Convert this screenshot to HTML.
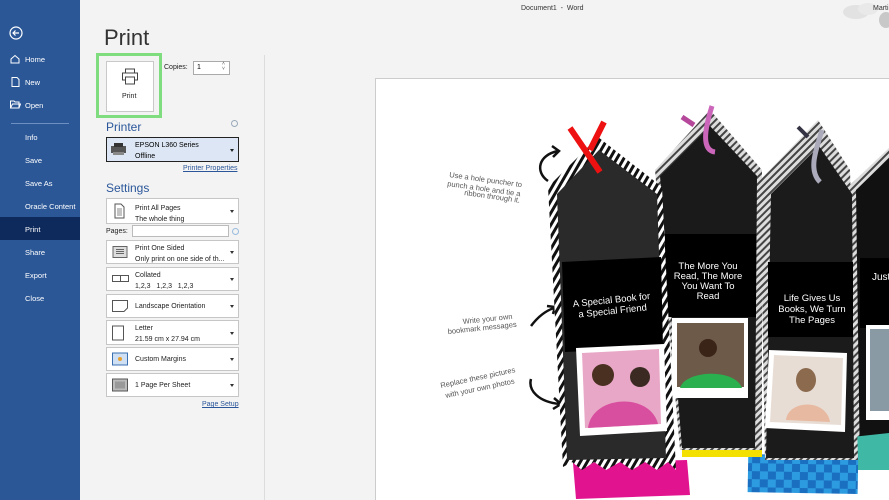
<!DOCTYPE html>
<html><head><meta charset="utf-8"><style>
*{margin:0;padding:0;box-sizing:border-box}
body{width:889px;height:500px;overflow:hidden;background:#f3f3f3;font-family:"Liberation Sans",sans-serif;position:relative}
.a{position:absolute}
#side{left:0;top:0;width:80px;height:500px;background:#2b5797}
.nav{position:absolute;left:25px;color:#fff;font-size:7.5px}
.dd{position:absolute;left:106px;width:133px;background:#fff;border:1px solid #c6c6c6;font-size:7px;color:#222}
.dd .t{position:absolute;left:28px;top:4px;line-height:11px}
.dd .ar{position:absolute;right:4px;top:50%;margin-top:-1px;border-left:2.5px solid transparent;border-right:2.5px solid transparent;border-top:3px solid #333}
.dd .ic{position:absolute;left:5px;top:50%;transform:translateY(-50%)}
.lnk{color:#2b579a;text-decoration:underline;font-size:7px}
</style></head><body>
<div id="side" class="a">
 <svg class="a" style="left:9px;top:26px" width="14" height="14" viewBox="0 0 14 14"><circle cx="7" cy="7" r="6" fill="none" stroke="#fff" stroke-width="1.2"/><path d="M10 7H4M6.5 4.5L4 7l2.5 2.5" fill="none" stroke="#fff" stroke-width="1.2"/></svg>
 <svg class="a" style="left:10px;top:54px" width="10" height="10" viewBox="0 0 10 10"><path d="M1 5L5 1.5 9 5V9H1Z" fill="none" stroke="#fff"/></svg>
 <div class="nav" style="top:55px">Home</div>
 <svg class="a" style="left:11px;top:77px" width="9" height="10" viewBox="0 0 9 10"><path d="M1 .5H6L8 2.5V9.5H1Z" fill="none" stroke="#fff"/></svg>
 <div class="nav" style="top:78px">New</div>
 <svg class="a" style="left:10px;top:100px" width="11" height="9" viewBox="0 0 11 9"><path d="M.5 1H4L5 2H9V8H.5ZM.5 8L2.5 4H10.5L9 8" fill="none" stroke="#fff"/></svg>
 <div class="nav" style="top:101px">Open</div>
 <div class="a" style="left:11px;top:123px;width:58px;height:1px;background:#6d8fc2"></div>
 <div class="nav" style="top:133px">Info</div>
 <div class="nav" style="top:156px">Save</div>
 <div class="nav" style="top:179px">Save As</div>
 <div class="nav" style="top:202px">Oracle Content</div>
 <div class="a" style="left:0;top:217px;width:80px;height:23px;background:#0e2a5c"></div>
 <div class="nav" style="top:225px">Print</div>
 <div class="nav" style="top:248px">Share</div>
 <div class="nav" style="top:271px">Export</div>
 <div class="nav" style="top:294px">Close</div>
</div>
<div class="a" style="left:521px;top:5px;font-size:7px;color:#333">Document1 &nbsp;- &nbsp;Word</div>
<svg class="a" style="left:820px;top:0" width="69" height="30"><ellipse cx="36" cy="12" rx="13" ry="7" fill="#e2e2e2"/><ellipse cx="48" cy="9" rx="10" ry="6" fill="#e9e9e9"/><ellipse cx="66" cy="20" rx="7" ry="8" fill="#c8c8c8"/></svg>
<div class="a" style="left:873px;top:5px;font-size:7px;color:#333">Marti</div>
<div class="a" style="left:104px;top:25px;font-size:22px;color:#333">Print</div>
<div class="a" style="left:96px;top:53px;width:66px;height:65px;border:3px solid #7fdc7f"></div>
<div class="a" style="left:106px;top:61px;width:48px;height:51px;background:#fff;border:1px solid #c9c9c9"></div>
<svg class="a" style="left:121px;top:68px" width="18" height="17" viewBox="0 0 18 17"><path d="M4.5 5V1H13.5V5M4.5 12H1.5V5H16.5V12H13.5M4.5 9H13.5V16H4.5Z" fill="#fff" stroke="#444" stroke-width="1"/></svg>
<div class="a" style="left:122px;top:93px;font-size:7px;color:#222">Print</div>
<div class="a" style="left:164px;top:64px;font-size:7px;color:#222">Copies:</div>
<div class="a" style="left:193px;top:61px;width:37px;height:14px;background:#fff;border:1px solid #aaa;font-size:7px;padding:2px 3px">1</div>
<div class="a" style="left:222px;top:62px;font-size:5px;color:#555;line-height:5px">˄<br>˅</div>
<div class="a" style="left:106px;top:120px;font-size:12px;color:#2b579a">Printer</div>
<div class="a" style="left:231px;top:120px;width:7px;height:7px;border:1px solid #9ab;border-radius:50%"></div>
<div class="a" style="left:106px;top:137px;width:133px;height:25px;background:#dce6f4;border:1.5px solid #222;font-size:7px">
 <svg class="a" style="left:3px;top:5px" width="18" height="13"><rect x="1" y="3" width="15" height="7" fill="#555"/><rect x="4" y="0" width="9" height="4" fill="#333"/><rect x="3" y="9" width="11" height="3" fill="#888"/></svg>
 <div class="a" style="left:28px;top:2px;line-height:11px">EPSON L360 Series<br>Offline</div>
 <div class="a" style="right:4px;top:11px;border-left:2.5px solid transparent;border-right:2.5px solid transparent;border-top:3px solid #222"></div>
</div>
<div class="a lnk" style="left:183px;top:165px">Printer Properties</div>
<div class="a" style="left:106px;top:181px;font-size:12px;color:#2b579a">Settings</div>
<div class="dd" style="top:198px;height:26px"><svg class="ic" width="14" height="16"><path d="M3 1H9L12 4V15H3Z" fill="#fff" stroke="#555"/><path d="M5 6H10M5 8H10M5 10H10M5 12H10" stroke="#888"/></svg><div class="t">Print All Pages<br>The whole thing</div><div class="ar"></div></div>
<div class="a" style="left:106px;top:228px;font-size:7px;color:#222">Pages:</div>
<div class="a" style="left:132px;top:225px;width:97px;height:12px;background:#fff;border:1px solid #bbb"></div>
<div class="a" style="left:232px;top:228px;width:7px;height:7px;border:1px solid #9bd;border-radius:50%"></div>
<div class="dd" style="top:240px;height:24px"><svg class="ic" width="16" height="13"><rect x="1" y="1" width="14" height="11" fill="#ddd" stroke="#666"/><path d="M4 4H12M4 6H12M4 8H12" stroke="#666"/></svg><div class="t" style="top:2px">Print One Sided<br>Only print on one side of th...</div><div class="ar"></div></div>
<div class="dd" style="top:267px;height:24px"><svg class="ic" width="18" height="8"><rect x=".5" y=".5" width="8" height="6" fill="#fff" stroke="#555"/><rect x="8.5" y=".5" width="8" height="6" fill="#fff" stroke="#555"/></svg><div class="t" style="top:2px">Collated<br>1,2,3 &nbsp;&nbsp;1,2,3 &nbsp;&nbsp;1,2,3</div><div class="ar"></div></div>
<div class="dd" style="top:294px;height:24px"><svg class="ic" width="16" height="12"><path d="M.5 .5H15.5V8L12 11.5H.5Z" fill="#fff" stroke="#555"/></svg><div class="t" style="top:6px">Landscape Orientation</div><div class="ar"></div></div>
<div class="dd" style="top:320px;height:25px"><svg class="ic" width="12" height="15"><rect x=".5" y=".5" width="11" height="14" fill="#fff" stroke="#555"/></svg><div class="t" style="top:2px">Letter<br>21.59 cm x 27.94 cm</div><div class="ar"></div></div>
<div class="dd" style="top:347px;height:24px"><svg class="ic" width="16" height="13"><rect x=".5" y=".5" width="15" height="12" fill="#cfe0f4" stroke="#3a6fb0"/><circle cx="8" cy="6.5" r="2" fill="#e8a030"/></svg><div class="t" style="top:6px">Custom Margins</div><div class="ar"></div></div>
<div class="dd" style="top:373px;height:24px"><svg class="ic" width="16" height="13"><rect x=".5" y=".5" width="15" height="12" fill="#bbb" stroke="#555"/><rect x="3" y="3" width="10" height="7" fill="#999"/></svg><div class="t" style="top:6px">1 Page Per Sheet</div><div class="ar"></div></div>
<div class="a lnk" style="left:202px;top:401px">Page Setup</div>
<div class="a" style="left:264px;top:55px;width:1px;height:445px;background:#dcdcdc"></div>
<div class="a" style="left:375px;top:78px;width:514px;height:422px;background:#fff;border-left:1px solid #ccc;border-top:1px solid #ccc"></div>
<svg class="a" style="left:0;top:0" width="889" height="500">
<defs>
<pattern id="zz" width="6" height="6" patternUnits="userSpaceOnUse" patternTransform="rotate(30)"><rect width="6" height="6" fill="#fff"/><rect width="3" height="6" fill="#111"/></pattern>
<pattern id="sk" width="5" height="5" patternUnits="userSpaceOnUse" patternTransform="rotate(45)"><rect width="5" height="5" fill="#ddd"/><rect width="2" height="5" fill="#444"/></pattern>
<pattern id="bc" width="16" height="16" patternUnits="userSpaceOnUse"><rect width="16" height="16" fill="#1a6fc0"/><rect width="8" height="8" fill="#2d9be0"/><rect x="8" y="8" width="8" height="8" fill="#2d9be0"/></pattern>
</defs>
<g font-family="Liberation Sans,sans-serif" fill="#555" font-size="7.5">
<text transform="translate(449,177) rotate(8)">Use a hole puncher to</text>
<text transform="translate(447,186) rotate(8)">punch a hole and tie a</text>
<text transform="translate(464,195) rotate(8)">ribbon through it.</text>
<text transform="translate(463,324) rotate(-6)">Write your own</text>
<text transform="translate(448,334) rotate(-6)">bookmark messages</text>
<text transform="translate(441,388) rotate(-12)">Replace these pictures</text>
<text transform="translate(446,398) rotate(-12)">with your own photos</text>
</g>
<g fill="none" stroke="#111" stroke-width="2.5">
<path d="M548 181C535 172 538 155 558 151M552 146L559 151 553 157"/>
<path d="M531 326C537 318 545 311 554 308M547 306L555 307 553 314"/>
<path d="M531 379C528 390 538 402 560 404M554 398L561 404 553 409"/>
</g>
<path d="M850 185L889 148V470H855Z" fill="url(#sk)"/>
<path d="M856 190L889 158V470H860Z" fill="#111"/>
<rect x="860" y="258" width="29" height="70" fill="#000"/>
<text x="872" y="280" fill="#fff" font-size="10" font-family="Liberation Sans,sans-serif">Just</text>
<rect x="866" y="325" width="23" height="95" fill="#fff"/><rect x="870" y="329" width="19" height="82" fill="#8a9aa5"/>
<path d="M852 437L889 433V470H855Z" fill="#3fb8a5"/>
<rect x="748" y="455" width="110" height="38" fill="url(#bc)" transform="rotate(1 800 470)"/>
<path d="M760 180L818 120L850 170L858 460H765Z" fill="url(#sk)"/>
<path d="M771 194L819 146L852 194L854 458H766Z" fill="#1b1b1b"/>
<rect x="768" y="262" width="85" height="75" fill="#000"/>
<text fill="#fff" font-size="9.5" font-family="Liberation Sans,sans-serif" text-anchor="middle"><tspan x="812" y="301">Life Gives Us</tspan><tspan x="812" y="312">Books, We Turn</tspan><tspan x="812" y="323">The Pages</tspan></text>
<path d="M769 350L847 353L845 432L765 428Z" fill="#fff"/>
<path d="M774 355L843 358L841 425L770 422Z" fill="#e8ddd5"/>
<ellipse cx="806" cy="380" rx="10" ry="12" fill="#8b6a4e"/><path d="M786 420C788 400 826 398 830 422Z" fill="#e7b9a0"/>
<path d="M798 127L808 137" stroke="#334" stroke-width="4"/><path d="M822 130C816 150 808 170 820 182" stroke="#aab" stroke-width="5" fill="none"/>
<rect x="682" y="450" width="80" height="7" fill="#f4e000"/>
<path d="M655 170L710 110L762 170L762 450H680Z" fill="url(#sk)"/>
<path d="M660 176L710 126L757 176L755 448H682Z" fill="#1a1a1a"/>
<rect x="665" y="234" width="91" height="83" fill="#000"/>
<text fill="#fff" font-size="9.5" font-family="Liberation Sans,sans-serif" text-anchor="middle"><tspan x="708" y="269">The More You</tspan><tspan x="708" y="279">Read, The More</tspan><tspan x="708" y="289">You Want To</tspan><tspan x="708" y="299">Read</tspan></text>
<rect x="672" y="318" width="76" height="80" fill="#fff"/>
<rect x="677" y="323" width="67" height="64" fill="#6d5a48"/>
<path d="M680 388C685 370 735 368 742 388Z" fill="#2ab04e"/><circle cx="708" cy="348" r="9" fill="#3a2418"/>
<path d="M682 117L694 125" stroke="#b5489a" stroke-width="5"/><path d="M712 106C706 125 700 150 715 152" stroke="#cc66bb" stroke-width="5" fill="none"/>
<path d="M573 463L687 460L690 495L576 499Z" fill="#e2138f"/>
<path d="M548 187L598 137L662 187L676 470L668 462L657 470L645 462L632 470L620 462L606 470L594 462L582 470L572 462L563 467Z" fill="url(#zz)"/>
<path d="M557 194L599 150L657 194L666 458L567 460Z" fill="#2a2a2a"/>
<path d="M562 262L661 257L663 348L565 352Z" fill="#000"/>
<text fill="#fff" font-size="9.5" font-family="Liberation Sans,sans-serif" text-anchor="middle" transform="rotate(-6 612 305)"><tspan x="612" y="303">A Special Book for</tspan><tspan x="612" y="314">a Special Friend</tspan></text>
<path d="M576 348L664 344L667 431L580 436Z" fill="#fff"/>
<path d="M582 353L659 349L661 424L585 428Z" fill="#e8a7c6"/>
<path d="M588 428C592 395 650 392 658 424Z" fill="#d94f9f"/><circle cx="603" cy="375" r="11" fill="#4a3020"/><circle cx="640" cy="377" r="10" fill="#3a2a22"/>
<path d="M570 128L600 172M604 122L590 150" stroke="#ee1111" stroke-width="6" fill="none"/>
</svg>
</body></html>
